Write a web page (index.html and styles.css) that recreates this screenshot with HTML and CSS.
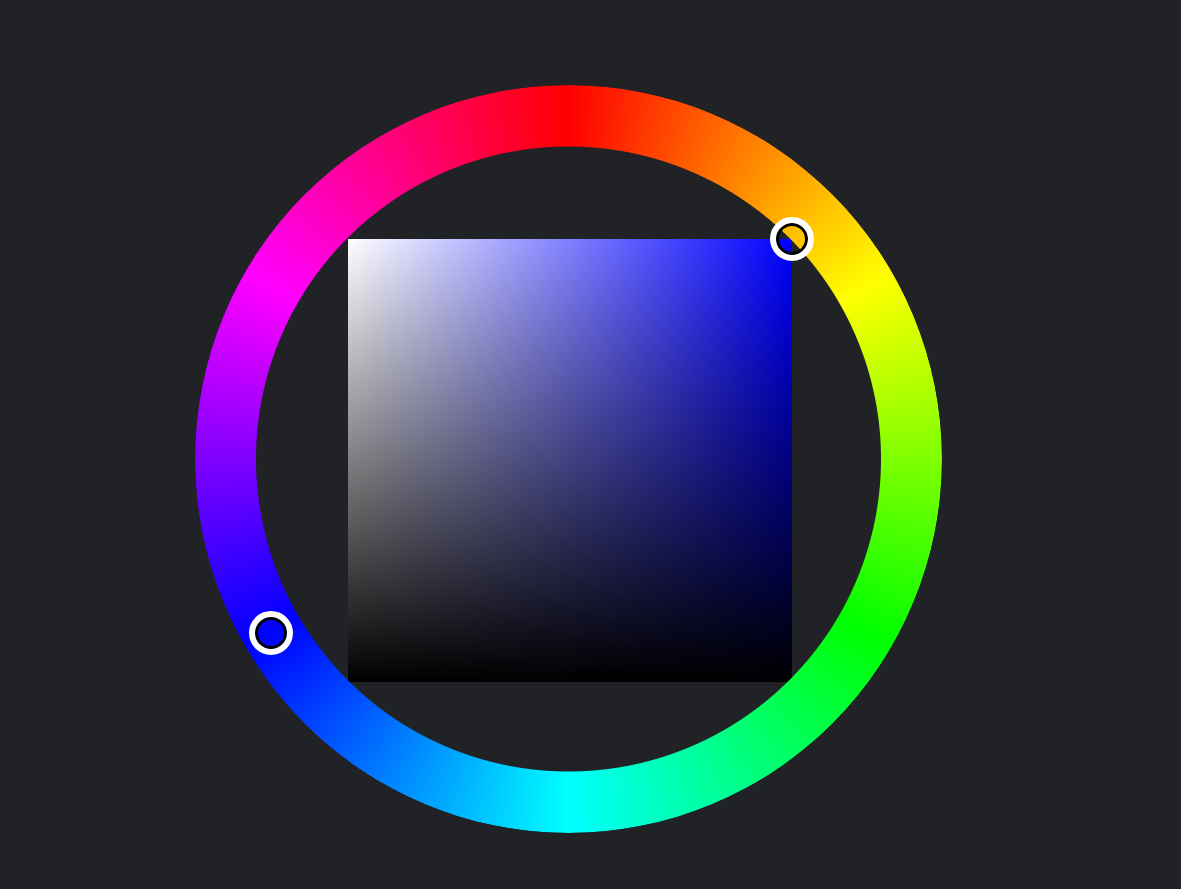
FILE: index.html
```html
<!DOCTYPE html>
<html lang="en">
<head>
    <meta charset="UTF-8">
    <meta name="viewport" content="width=device-width, initial-scale=1.0">
    <title>Color Wheel</title>
    <link rel="stylesheet" href="styles.css">
</head>
<body>
    <main class="picker">
        <div class="wheel">
            <div class="hue-ring"></div>
            <div class="sv-square"></div>
            <div class="handle hue-handle"></div>
            <div class="handle sv-handle"></div>
        </div>
    </main>
</body>
</html>
```

FILE: styles.css
```css
body {
    background-color: #212226;
    margin: 0;
    padding: 0;
    font-family: "Liberation Sans", Arial, sans-serif;
}

.picker {
    padding: 85px 0 0 195px;
}

.wheel {
    position: relative;
    width: 747px;
    height: 748px;
    display: grid;
    place-items: center;
}

.hue-ring,
.sv-square {
    grid-area: 1 / 1;
}

.hue-ring {
    width: 100%;
    height: 100%;
    border-radius: 50%;
    background: conic-gradient(from 0deg, #ff0000, #ffff00, #00ff00, #00ffff, #0000ff, #ff00ff, #ff0000);
    -webkit-mask: radial-gradient(circle, transparent 312px, #000 313px);
    mask: radial-gradient(circle, transparent 312px, #000 313px);
}

.sv-square {
    width: 444px;
    height: 443px;
    margin: 2px 0 0 2px;
    background:
        linear-gradient(to top, #000, rgba(0, 0, 0, 0)),
        linear-gradient(to right, #fff, #0000ff);
}

.handle {
    position: absolute;
    width: 44px;
    height: 44px;
    box-sizing: border-box;
    border: 6px solid #fff;
    border-radius: 50%;
    box-shadow: inset 0 0 0 3px #000;
}

.hue-handle {
    left: 54px;
    top: 526px;
}

.sv-handle {
    left: 575px;
    top: 132px;
}
```
